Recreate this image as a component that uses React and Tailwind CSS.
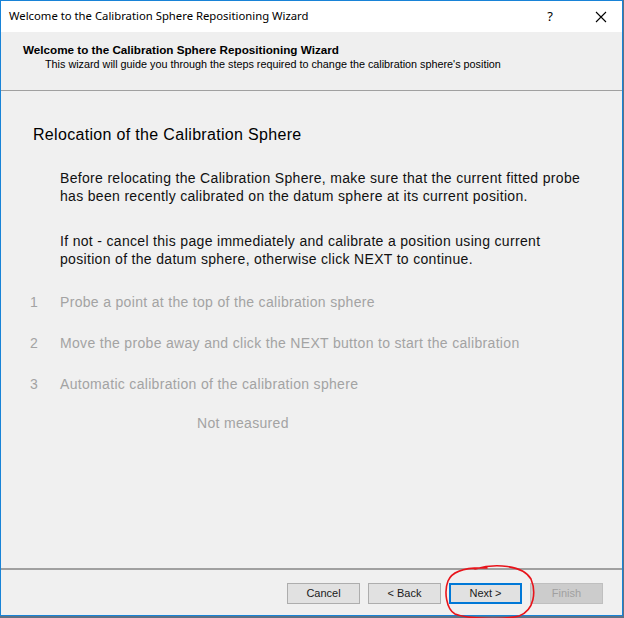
import React from 'react';

const sans = { fontFamily: '"Liberation Sans", Arial, sans-serif' };

const steps = [
  'Probe a point at the top of the calibration sphere',
  'Move the probe away and click the NEXT button to start the calibration',
  'Automatic calibration of the calibration sphere',
];

const WizardButton = ({ children, primary, disabled }) => {
  let cls = 'w-[73px] h-[21px] text-[11px] flex items-center justify-center ';
  if (primary) cls += 'border-2 border-[#0078d7] bg-[#e1e1e1] text-[#1a1a1a]';
  else if (disabled) cls += 'border border-[#bfbfbf] bg-[#cccccc] text-[#a0a0a0]';
  else cls += 'border border-[#adadad] bg-[#e1e1e1] text-[#1a1a1a]';
  return (
    <button className={cls} style={sans}>
      {children}
    </button>
  );
};

export default function App() {
  return (
    <div className="w-[624px] h-[618px] bg-[#5f7184]">
      <div className="relative w-[623px] h-[616px] border border-[#1883d7] bg-[#f0f0f0] flex flex-col">
        {/* title bar */}
        <div
          className="h-[31px] shrink-0 bg-white flex items-center pl-[8px] text-[11.3px] text-black"
          style={{ fontFamily: '"Noto Sans", "Open Sans", sans-serif' }}
        >
          <span className="flex-1">Welcome to the Calibration Sphere Repositioning Wizard</span>
          <span className="w-[20px] text-center mr-[35px] text-[13px]">?</span>
          <svg width="12" height="12" viewBox="0 0 12 12" className="mr-[15px]">
            <path d="M1 1 L11 11 M11 1 L1 11" stroke="#000" strokeWidth="1.1" />
          </svg>
        </div>

        {/* header */}
        <div className="h-[59px] shrink-0 border-b border-[#a0a0a0] bg-[#efefef] pt-[10px] text-black" style={sans}>
          <div className="pl-[22px] font-bold text-[11.7px] leading-[15px]">
            Welcome to the Calibration Sphere Repositioning Wizard
          </div>
          <div className="pl-[44px] text-[10.8px] leading-[15px]">
            This wizard will guide you through the steps required to change the calibration sphere's position
          </div>
        </div>

        {/* body */}
        <div className="flex-1 text-black tracking-[0.32px]" style={sans}>
          <div className="mt-[34px] pl-[32px] text-[16px] leading-[20px]">Relocation of the Calibration Sphere</div>
          <div className="mt-[24px] pl-[59px] text-[14px] leading-[18px] text-[#111]">
            <p>
              Before relocating the Calibration Sphere, make sure that the current fitted probe
              <br />
              has been recently calibrated on the datum sphere at its current position.
            </p>
            <p className="mt-[27px]">
              If not - cancel this page immediately and calibrate a position using current
              <br />
              position of the datum sphere, otherwise click NEXT to continue.
            </p>
          </div>
          <div className="mt-[25px] flex flex-col gap-[23px] text-[14px] leading-[18px] text-[#a3a3a3]">
            {steps.map((s, i) => (
              <div key={i} className="flex">
                <span className="w-[59px] pl-[29px]">{i + 1}</span>
                <span>{s}</span>
              </div>
            ))}
          </div>
          <div className="mt-[21px] pl-[196px] text-[14px] leading-[18px] text-[#a3a3a3]">Not measured</div>
        </div>

        {/* footer */}
        <div className="h-[47px] shrink-0 border-t-2 border-[#a0a0a0] pt-[13px] pr-[19px] flex justify-end gap-[8px]">
          <WizardButton>Cancel</WizardButton>
          <WizardButton>&lt; Back</WizardButton>
          <WizardButton primary>Next &gt;</WizardButton>
          <WizardButton disabled>Finish</WizardButton>
        </div>

        {/* hand-drawn red mark */}
        <svg className="absolute left-[442px] top-[559px]" width="96" height="60" viewBox="0 0 96 60" fill="none">
          <path
            d="M32 9 C52 3 80 5 88 19 C93 31 92 50 76 56 C60 60 25 59 12 54 C3 49 1 31 5 21 C9 11 22 7 44 8"
            stroke="#e8141b"
            strokeWidth="1.6"
            strokeLinecap="round"
          />
        </svg>
      </div>
    </div>
  );
}
